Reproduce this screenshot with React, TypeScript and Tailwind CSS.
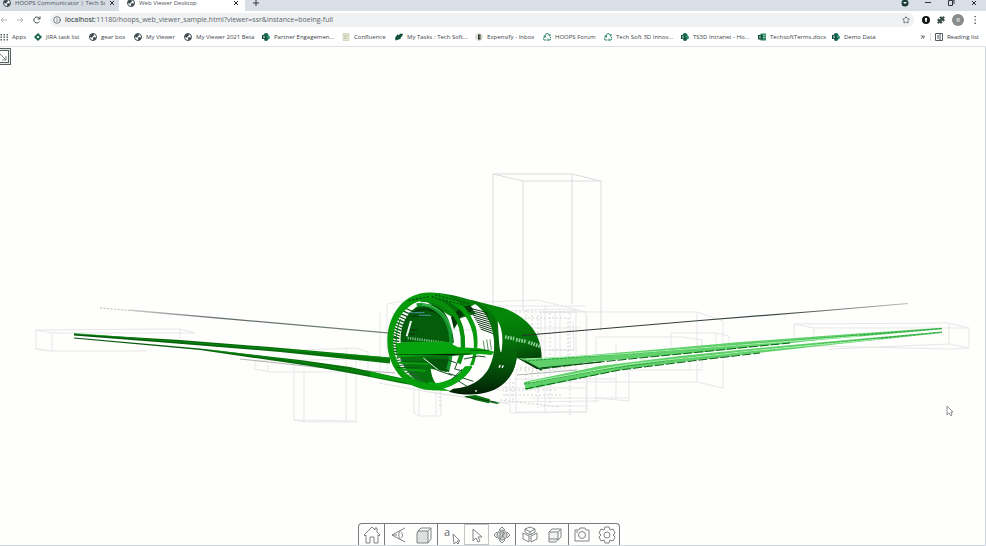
import type { ReactNode } from "react";
import { ChevronsRight, Info, Puzzle, Star } from "lucide-react";

function Globe() {
  return (
    <svg viewBox="0 0 16 16" className="size-2 shrink-0" aria-hidden="true">
      <circle cx="8" cy="8" r="7" fill="#fff" stroke="#38464b" strokeWidth="2" />
      <path d="M2 5 6 1.500 9 2 10 5 7 7 7 9 4 9 1.500 7zM9 8l5 1-1 4-4 2-1-3z" fill="#38464b" />
    </svg>
  );
}

function Sharepoint() {
  return (
    <svg viewBox="0 0 16 16" className="size-2 shrink-0" aria-hidden="true">
      <circle cx="8" cy="5" r="5" fill="#16684c" />
      <circle cx="12" cy="9" r="4" fill="#2d9279" />
      <circle cx="8" cy="12" r="4" fill="#175b43" />
      <path d="M0 4h8v8H0z" fill="#0c4937" />
      <path d="M6 6H3v2h2v2H2" fill="none" stroke="#fff" />
    </svg>
  );
}

function Grid() {
  return (
    <svg viewBox="0 0 16 16" className="size-2 shrink-0" aria-hidden="true">
      <path d="M1 2h3v3H1zM7 2h3v3H7zM13 2h3v3h-3zM1 7h3v3H1zM7 7h3v3H7zM13 7h3v3h-3zM1 12h3v3H1zM7 12h3v3H7zM13 12h3v3h-3z" fill="#5d6564" />
    </svg>
  );
}

function Jira() {
  return (
    <svg viewBox="0 0 16 16" className="size-2 shrink-0" aria-hidden="true">
      <path d="M8 0 16 8 8 16 0 8z" fill="#115f47" />
      <path d="m8 5 3 3-3 3-3-3z" fill="#fff" />
    </svg>
  );
}

function Sheet() {
  return (
    <svg viewBox="0 0 16 16" className="size-2 shrink-0" aria-hidden="true">
      <path d="M2 1h12v14H2z" fill="#e4e8cf" stroke="#b8bea0" />
      <path d="M4 5h7M4 8h8M4 11h5" stroke="#a7ad91" />
    </svg>
  );
}

function Leaf() {
  return (
    <svg viewBox="0 0 16 16" className="size-2 shrink-0" aria-hidden="true">
      <path d="M1 8 5 3l3 1 3-3 5 1-2 5-2 1-1 4-4 1-5 2-2-3z" fill="#12513d" />
    </svg>
  );
}

function Expensify() {
  return (
    <svg viewBox="0 0 16 16" className="size-2 shrink-0" aria-hidden="true">
      <circle cx="8" cy="8" r="7" fill="#e4e4d8" stroke="#c5c7b8" />
      <path d="M6 3h5v10H6z" fill="#25332c" />
      <path d="M8 6h2M8 9h2" stroke="#ddd" />
    </svg>
  );
}

function Recycle() {
  return (
    <svg viewBox="0 0 16 16" className="size-2 shrink-0" fill="none" stroke="#35886f" strokeWidth="2" aria-hidden="true">
      <path d="M4 6 7 1h3l3 4M14 7l2 4-2 3h-4M7 14H2l-1-3 3-5M11 4l3 2V2M10 11v5M1 6h4v3" />
    </svg>
  );
}

function Excel() {
  return (
    <svg viewBox="0 0 16 16" className="size-2 shrink-0" aria-hidden="true">
      <path d="M5 1h11v14H5z" fill="#2f8d68" />
      <path d="M0 4h9v9H0z" fill="#0d4934" />
      <path d="m2 6 4 5m0-5-4 5M10 5h5M10 9h5" stroke="#fff" />
    </svg>
  );
}

const bookmarks: { label: string; icon: ReactNode; width: string }[] = [
  { label: "Apps", icon: <Grid />, width: "w-[34px]" },
  { label: "JIRA task list", icon: <Jira />, width: "w-[55px]" },
  { label: "gear box", icon: <Globe />, width: "w-[45px]" },
  { label: "My Viewer", icon: <Globe />, width: "w-[50px]" },
  { label: "My Viewer 2021 Beta", icon: <Globe />, width: "w-[78px]" },
  { label: "Partner Engagemen...", icon: <Sharepoint />, width: "w-[80px]" },
  { label: "Confluence", icon: <Sheet />, width: "w-[53px]" },
  { label: "My Tasks : Tech Soft...", icon: <Leaf />, width: "w-[80px]" },
  { label: "Expensify - Inbox", icon: <Expensify />, width: "w-[68px]" },
  { label: "HOOPS Forum", icon: <Recycle />, width: "w-[61px]" },
  { label: "Tech Soft 3D Innov...", icon: <Recycle />, width: "w-[77px]" },
  { label: "TS3D Intranet - Ho...", icon: <Sharepoint />, width: "w-[77px]" },
  { label: "TechsoftTerms.docx", icon: <Excel />, width: "w-[74px]" },
  { label: "Demo Data", icon: <Sharepoint />, width: "w-[50px]" },
];

function Cross() {
  return (
    <svg viewBox="0 0 8 8" className="size-2 shrink-0" stroke="#272e32" aria-hidden="true">
      <path d="m2 2 4 4m0-4L2 6" />
    </svg>
  );
}

function TabStrip() {
  return (
    <div className="flex h-[11px] flex-col justify-end overflow-hidden bg-[#d9dfe6] text-[6px]">
      <div className="flex h-[17px] shrink-0 items-center">
        <div className="flex h-full w-[119px] items-center rounded-br-md bg-[#d5dbe2] pl-[3px]">
          <button className="flex min-w-0 flex-1 items-center gap-1">
            <Globe />
            <span className="w-[90px] overflow-hidden text-left whitespace-nowrap">HOOPS Communicator | Tech So</span>
          </button>
          <button aria-label="Close HOOPS Communicator" className="mr-[3px]"><Cross /></button>
        </div>
        <div className="flex h-full w-[126px] items-center bg-white pl-2">
          <button className="flex flex-1 items-center gap-1">
            <Globe />
            <span>Web Viewer Desktop</span>
          </button>
          <button aria-label="Close Web Viewer Desktop" className="mr-[5px]"><Cross /></button>
        </div>
        <button aria-label="New tab" className="ml-[7px]">
          <svg viewBox="0 0 8 8" className="size-2" stroke="#30373b"><path d="M4 1v6M1 4h6" /></svg>
        </button>
        <div className="ml-auto flex items-center gap-[15px] pr-2">
          <button aria-label="Account">
            <svg viewBox="0 0 8 8" className="size-2"><circle cx="4" cy="4" r="3.500" fill="#173c33" /><path d="M2 3h4L4 5z" fill="#fff" /></svg>
          </button>
          <button aria-label="Minimize">
            <svg viewBox="0 0 8 8" className="size-2" stroke="#30373b"><path d="M1 3.500h6" /></svg>
          </button>
          <button aria-label="Restore">
            <svg viewBox="0 0 8 8" className="size-2" fill="none" stroke="#30373b"><path d="M1.500 1.500h4v5h-4zM3 1h4v4" /></svg>
          </button>
          <button aria-label="Close window"><Cross /></button>
        </div>
      </div>
    </div>
  );
}

function AddressBar() {
  return (
    <div className="flex h-[18px] items-center bg-white">
      <button aria-label="Back" className="w-[15px]">
        <svg viewBox="0 0 8 8" className="size-2" fill="none" stroke="#b3b7b9"><path d="M7 4H1m2.500-2.500L1 4l2.500 2.500" /></svg>
      </button>
      <button aria-label="Forward" className="w-[18px]">
        <svg viewBox="0 0 8 8" className="ml-px size-2" fill="none" stroke="#b3b7b9"><path d="M1 4h6M4.500 1.500 7 4 4.500 6.500" /></svg>
      </button>
      <button aria-label="Reload" className="w-[17px]">
        <svg viewBox="0 0 8 8" className="size-2" fill="none" stroke="#40484b"><path d="M6.500 5.500a3 3 0 1 1 0-3M7 .500v2.500H4.500" /></svg>
      </button>
      <div className="flex h-[14px] flex-1 items-center rounded-full bg-[#eff1f2] pr-1 pl-[3px]">
        <Info className="size-2 shrink-0 text-[#40484b]" />
        <div className="relative ml-1 h-[14px] min-w-0 flex-1">
          <input
            id="address"
            aria-label="Address"
            className="h-[14px] w-full bg-transparent text-[7px] leading-[14px] text-[#60676b] outline-none"
            defaultValue="localhost:11180/hoops_web_viewer_sample.html?viewer=ssr&instance=boeing-full"
          />
          <label htmlFor="address" className="absolute top-0 left-0 bg-[#eff1f2] text-[7px] leading-[14px] text-[#242b2f]">localhost</label>
        </div>
        <button aria-label="Bookmark this page"><Star className="size-2 text-[#40484b]" /></button>
      </div>
      <div className="ml-2 flex items-center gap-[7px] pr-[7px]">
        <button aria-label="Password manager">
          <svg viewBox="0 0 8 8" className="size-2"><circle cx="4" cy="4" r="4" fill="#111817" /><path d="M3 2h2v2l-.5 2h-1L3 4z" fill="#fff" /></svg>
        </button>
        <button aria-label="Extensions"><Puzzle className="size-2 fill-[#344743] text-[#344743]" /></button>
        <button aria-label="Profile" className="flex size-3 items-center justify-center rounded-full bg-[#888c8b] text-[6px] text-white">R</button>
        <button aria-label="Menu">
          <svg viewBox="0 0 8 8" className="size-2" fill="#40484b"><path d="M3.500 0h1.300v1.300H3.500zM3.500 3.300h1.300v1.300H3.500zM3.500 6.600h1.300v1.300H3.500z" /></svg>
        </button>
      </div>
    </div>
  );
}

function BookmarkBar() {
  return (
    <nav className="flex h-[18px] items-center border-b border-[#dfe2e3] bg-white pb-[2px] text-[6px] text-[#3b4246]">
      {bookmarks.map((b) => (
        <a key={b.label} href="#" className={`flex shrink-0 items-center gap-1 whitespace-nowrap ${b.width}`}>
          {b.icon}
          <span>{b.label}</span>
        </a>
      ))}
      <div className="ml-auto flex items-center pr-[7px]">
        <button aria-label="More bookmarks"><ChevronsRight strokeWidth={4} className="size-[6px]" /></button>
        <span className="mx-1 h-2 w-px bg-[#d8dbdd]" />
        <a href="#" className="flex items-center gap-1 whitespace-nowrap">
          <svg viewBox="0 0 8 8" className="size-2" fill="none" stroke="#555c60"><path d="M.500.500h7v7h-7zM5 1v6M2 3h2M2 5h2" /></svg>
          Reading list
        </a>
      </div>
    </nav>
  );
}

const hatchLeft = Array.from({ length: 18 }, (_, i) => {
  const y = 84 + i * 8;
  const x = 60 + (y < 170 ? (170 - y) ** 2 * 0.006 : 0);
  return `M${x} ${y}l28 ${y < 170 ? 12 : 4}`;
}).join("");

const hatchRight = Array.from({ length: 10 }, (_, i) => `M${296 + i * 4} ${84 + i * 7}l${56 - i * 2} 14`).join("");

const hatchLow = Array.from({ length: 11 }, (_, i) => `M${66 + i * 7} ${236 + i * 7}l26 -4`).join("");

function Boxes() {
  return (
    <g fill="none" stroke="#e7e7e7" strokeWidth="1">
      <path stroke="#dcdcdc" d="M493 305V174l79 0 29 7v150M493 174l30 7h78M523 181v130M572 174v130" />
      <path d="M36 330l16 3h143l-15-4L36 330v19l16 2h95M52 333v18M180 329v10M36 349l16 2" />
      <path d="M255 361v8l15 3h70M255 361l110-2M268 365v7M294 365v55l10 2h52V352M304 370v52M346 349v72M294 420l62 1M304 350l52-2 12 4v22" />
      <path d="M414 371v42l5 3h22v-35M419 378v38M436 380v35M379 383l50 9 70 10 100-1M429 392l80 12" />
      <path d="M387 304l15-3h60M387 304v70M402 301v70M386 330h100M380 313v60M483 302l55-2 48 12v100l-76 1M498 306h88M510 311v101M545 305v107M541 312h35v58h-35zM555 312v60M560 310v50M493 328h88M586 312l-24-3-60 2M587 316v96M516 372v40l71 0M506 350h68l-1-28" />
      <path d="M540 312h157l26 9v67l-26-6H560M697 312v70M596 337v66M596 337h88l18 3v30h-86M616 344v56M671 333h45l13 3v10M671 333v15l20 4M716 333v14M629 371v30l-33-3M640 360h50v10M530 398h99M515 379h100M500 388h85M540 406h48" />
      <path d="M794 324l20 4h155l-21-5L794 324v14l20 3M814 328v18l135 3 20-1v-20M949 323v21l20 4M949 344l-120 5" />
      <path strokeDasharray="2 2" stroke="#d4d4d4" d="M515 312h55v105M520 318h48v50h-48M526 310v80M532 315v70M538 315v93M550 313v90M498 390h60M503 395h58M500 370h40M506 374v28M513 382v20M552 350h25M440 384v25M500 400l60 7" />
    </g>
  );
}

function Airframe() {
  return (
    <svg viewBox="0 47 985 498" className="absolute inset-0 size-full" role="img" aria-label="Aircraft model">
      <defs>
        <linearGradient id="shell" x1="0" y1="0" x2="0.300" y2="1">
          <stop offset="0" stopColor="#06780b" />
          <stop offset="0.400" stopColor="#048808" />
          <stop offset="0.700" stopColor="#047009" />
          <stop offset="1" stopColor="#032c07" />
        </linearGradient>
        <linearGradient id="band" x1="0" y1="0" x2="0" y2="1">
          <stop offset="0" stopColor="#047a08" />
          <stop offset="0.600" stopColor="#046209" />
          <stop offset="0.850" stopColor="#033b08" />
          <stop offset="1" stopColor="#021d05" />
        </linearGradient>
        <linearGradient id="spar" x1="0" y1="0" x2="1" y2="0">
          <stop offset="0" stopColor="#c8ccca" />
          <stop offset="0.350" stopColor="#626d69" />
          <stop offset="1" stopColor="#74807a" />
        </linearGradient>
        <linearGradient id="sparRight" x1="536" y1="0" x2="908" y2="0" gradientUnits="userSpaceOnUse">
          <stop offset="0" stopColor="#26332d" />
          <stop offset="0.650" stopColor="#3a4641" />
          <stop offset="1" stopColor="#b9bfbc" />
        </linearGradient>
        <linearGradient id="wing" x1="0" y1="0" x2="1" y2="0">
          <stop offset="0" stopColor="#07540f" />
          <stop offset="1" stopColor="#08790b" />
        </linearGradient>
      </defs>
      <Boxes />
      <path d="M100 308l30 2.500" stroke="#bbb" strokeDasharray="2 1.500" />
      <path d="M130 309.500 390 332.500v1.200L130 311z" fill="url(#spar)" />
      <path d="M240 359l75 8 80 6M517 375l60-5M680 361l55-5" stroke="#9ba39e" fill="none" strokeWidth="0.800" />

      <g fill="url(#wing)">
        <path d="M74 333.800 180 340 270 347 390 357.500v6L280 352 170 343 74 335.500z" />
        <path d="M74 337.500 200 348.500 300 360 350 367 410 380 434 389 400 383 360 375 310 366 200 350 74 338.500z" />
      </g>
      <path d="M74 333.500 390 358M210 350l80 10 100 17" fill="none" stroke="#07990b" strokeWidth="0.700" />

      <g transform="translate(370 280) scale(.333333)">
        <path d="M190 38C225 39 265 48 300 59L400 84C450 100 485 135 500 165C516 200 516 230 515 266L500 267L440 233C435 268 420 300 380 322L372 210C377 150 350 95 320 70L245 110L160 60Z" fill="url(#shell)" />
        <path d="M300 59C365 70 400 140 402 205L441 205C443 245 432 288 395 316C355 347 290 350 236 335L250 326C300 324 335 300 355 268C390 200 376 110 310 68Z" fill="url(#band)" />
        <path d="M195 48C245 54 284 72 320 101L272 114C244 79 215 68 180 66Z" fill="#056d0a" />
        <path d="M243 112C260 88 282 80 299 75L312 90L275 108L252 148Z" fill="#043a08" />
        <path d="M150 75C210 62 242 100 252 188H92C88 142 110 93 150 75Z" fill="#045d0b" />
        <path d="M130 100C150 80 200 84 225 120" fill="none" stroke="#043f0a" strokeWidth="8" />
        <path d="M125 108h40M111 150h30M105 162h30" stroke="#083c12" strokeWidth="4" />
        <path d="M118 98h45M147 106h36" stroke="#4d969b" strokeWidth="3" />
        <path d="M123 123l-13 46" stroke="#e8f8eb" strokeWidth="6" />
        <path d="M113 174l108 14" stroke="#72bb79" strokeWidth="8" strokeDasharray="4 3" />
        <path d="M86 218H240L230 280L190 270L205 322L183 324C140 310 100 276 86 218Z" fill="#05720c" />
        <path d="M170 236H238V276L190 266Z" fill="#04560b" />
        <path d="M182 266C186 300 200 322 219 320C277 311 300 282 311 247L308 222H240V278Z" fill="#fefefd" />
        <path d={hatchLeft} stroke="#06530e" strokeWidth="4" />
        <path d={hatchRight} stroke="#123918" strokeWidth="3" />
        <path d={hatchLow} stroke="#2d653d" strokeWidth="3" />
        <path d="M140 75C180 68 228 98 240 155C247 193 244 239 233 269" fill="none" stroke="#15972d" strokeWidth="10" />
        <path d="M151 60C210 54 258 91 273 142C284 186 280 220 266 250" fill="none" stroke="#078e0c" strokeWidth="13" />
        <path d="M157 75C193 71 235 102 247 158" fill="none" stroke="#7ddb8b" strokeWidth="2" />
        <path d="M190 38C109 30 52 98 52 183C52 273 116 331 189 331C242 326 287 298 307 261L286 259C263 292 229 308 189 311C121 308 70 262 70 184C70 112 116 58 188 56C254 58 296 104 308 159C315 198 312 226 300 255L311 255C323 219 327 178 317 140C300 89 258 42 190 38Z" fill="#079b0c" />
        <path d="M92 118C78 145 74 192 84 238" fill="none" stroke="#098411" strokeWidth="3" />
        <path d="M185 50l90 24M195 44l101 27M116 62l60-12" stroke="#07520b" strokeWidth="4" strokeDasharray="7 4" />
        <path d="M77 190L130 185H230L265 202L328 205L374 215L364 225L330 222L290 225L85 231Z" fill="#07a50d" />
        <path d="M77 223l170 3 57-5M300 211h58M92 245h95M80 263h64" stroke="#045f0b" strokeWidth="3" />
        <path d="M85 248l90 4M92 268l75 4" stroke="#0a9a12" strokeWidth="6" />
        <path d="M160 234l55 44" stroke="#e6f6e8" strokeWidth="3" />
        <path d="M200 270l46 16M226 318l51-51M253 295l44 28M230 238l31 12-7 17 29 7M282 237l44-9 20 3M235 280l75 24" fill="none" stroke="#174e27" strokeWidth="3" />
        <path d="M174 303c37 17 86 0 109-42l24-5c-15 40-70 74-118 75z" fill="#08a910" />
        <path d="M0 274L90 296L190 315L242 333L190 331L100 307L0 289Z" fill="#079d0c" />
        <path d="M383 122C397 145 401 178 394 217C388 217 386 164 383 122Z" fill="#f9fffa" />
        <path d="M340 182l4 30M350 178l5 34M360 178l4 32" stroke="#0b5f12" strokeWidth="2" />
        <path d="M405 171l28 5M438 179l32 6M475 187l36 12" stroke="#8bd096" strokeWidth="11" strokeDasharray="5 3" />
        <path d="M387 263l4-8M396 264l4-8M317 335l2-5" stroke="#fff" strokeWidth="4" />
        <path d="M282 349l35-4 43 13-3 12-40-9zM340 363l50 5-8 4z" fill="#087311" />
        <path d="M286 350l94 17" stroke="#04400a" strokeWidth="3" />
      </g>

      <path d="M522 335.500 700 320.500 820 311 908 303.500" fill="none" stroke="url(#sparRight)" strokeWidth="1.200" />
      <path d="M518 358 541 359 650 350 740 342 850 334 942 327.800v1.500L820 340 700 352.500 590 362 541 369 526 361z" fill="#5fd06a" />
      <path d="M524 382 600 366 680 356 780 346 880 337 942 331.800v1.200L820 346 700 359.500 620 370 526 390z" fill="#5fd06a" />
      <path d="M524 361 650 352 800 340 942 328.500M524 384 600 370 700 356 942 332" stroke="#2f9d3f" fill="none" strokeDasharray="3 1" />
      <path d="M541 369 590 363 680 354 790 343M525 389 560 382 620 370 700 360 760 353" stroke="#0a6515" fill="none" strokeDasharray="9 2" />
      <path d="M525 361 541 370v-2l60-6" fill="none" stroke="#05470c" strokeWidth="1.200" />
      <path d="M526 359 620 354 740 345 860 336M530 382 630 364 750 351 880 339" stroke="#a4f0a8" fill="none" strokeWidth="1.200" />
      <path d="M947 406v9l2-2 2 3 1-1-1-3h2z" fill="#fff" stroke="#777" strokeWidth="0.800" />
    </svg>
  );
}

function ToolIcon({ children }: { children: ReactNode }) {
  return (
    <svg viewBox="0 0 20 20" className="size-5" fill="none" stroke="#808484" strokeWidth="1" aria-hidden="true">
      {children}
    </svg>
  );
}

const pointer = "M6 4v12l3-3 2 4 2-1-2-4h4z";

const toolGroups: { label: string; active?: boolean; icon: ReactNode }[][] = [
  [
    { label: "Home", icon: <path d="M2 10 10 2l3 3V3h2v4l3 3-1 1-1-1v8h-4v-6H8v6H4v-8l-1 1z" /> },
  ],
  [
    { label: "View orientation", icon: <path d="M16 3 3 10l13 7M12 5c-3 3-3 7 0 10M12 7c2 2 2 4 0 6M3 10h5" /> },
    { label: "Draw mode", icon: <><path d="M4 6h10v12H3V8z" fill="#dedfdf" /><path d="m4 6 3-3h10v11l-3 4M14 6l3-3" /></> },
  ],
  [
    {
      label: "Select and annotate",
      icon: <><path d="m11 9 1 10 2-2 2 2 1-1-2-2h3z" /><text x="2" y="11" fontSize="11" fill="#626666" stroke="none">a</text></>,
    },
    { label: "Select", active: true, icon: <path d={pointer} /> },
    {
      label: "Orbit camera",
      icon: <><circle cx="10" cy="10" r="5" fill="#d5d6d6" /><path d="m7 5 3-3 3 3M7 15l3 3 3-3M5 7l-3 3 3 3M15 7l3 3-3 3M8 7v7l5-6M8 7h4l-2 3 3 4" /></>,
    },
  ],
  [
    { label: "Explode", icon: <path d="m5 4 5-2 5 2-5 3zM5 4v3l5 3 5-3V4M3 8l6 3v6l-6-3zM17 8l-6 3v6l6-3zM10 7v3" /> },
    { label: "Cutting plane", icon: <><path d="M4 7h9v7l-2 3H4z" fill="#f1f2f2" /><path d="m4 7 3-3h9v8l-3 3M13 7l3-3M4 14h9" /></> },
  ],
  [
    { label: "Snapshot", icon: <><path d="M3 5h4l1-2h5l1 2h3v11H3z" /><circle cx="10" cy="10" r="3.500" /><path d="M4 7h2" /></> },
    {
      label: "Settings",
      icon: <><path d="m8 2-1 3-3-1-2 4 2 2-2 2 2 4 3-1 1 3h4l1-3 3 1 2-4-2-2 2-2-2-4-3 1-1-3z" /><circle cx="10" cy="10" r="3" /></>,
    },
  ],
];

function ViewerToolbar() {
  return (
    <div role="toolbar" className="relative mt-auto mr-[7px] flex h-[22px] self-center rounded-t border border-b-0 border-[#777b7b] bg-[#fefefd]">
      {toolGroups.map((group) => (
        <div key={group[0].label} className="flex border-r border-[#777b7b] px-px first:px-0 last:border-r-0 last:px-0">
          {group.map((tool) => (
            <button
              key={tool.label}
              aria-label={tool.label}
              className={`flex w-[25px] items-center justify-center border ${tool.active ? "border-[#c4c6c6]" : "border-transparent"}`}
            >
              <ToolIcon>{tool.icon}</ToolIcon>
            </button>
          ))}
        </div>
      ))}
    </div>
  );
}

export default function App() {
  return (
    <div className="flex min-h-screen flex-col overflow-hidden bg-[#fefefd] font-['Open_Sans','Noto_Sans',sans-serif] text-[7px] leading-[10px] text-[#4b5257]">
      <header>
        <TabStrip />
        <AddressBar />
        <BookmarkBar />
      </header>
      <main className="relative flex flex-1 flex-col items-start border-r border-b border-[#cfd6df]">
        <Airframe />
        <button aria-label="Show model browser" className="relative mt-px flex h-[17px] w-[11px] items-center justify-end overflow-hidden border border-l-0 border-[#59605f] bg-[#e6eae8] pr-px">
          <span className="flex h-[13px] w-full items-center justify-center border border-l-0 border-[#59605f] bg-white">
            <svg viewBox="0 0 8 8" className="size-2" fill="none" stroke="#7d8482"><path d="m0 1 6 6M6 3v4H2" /></svg>
          </span>
        </button>
        <ViewerToolbar />
      </main>
    </div>
  );
}
